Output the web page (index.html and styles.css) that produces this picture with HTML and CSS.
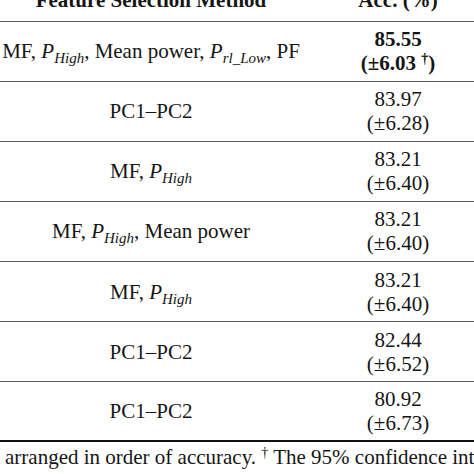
FILE: index.html
```html
<!DOCTYPE html>
<html>
<head>
<meta charset="utf-8">
<link rel="stylesheet" href="styles.css">
</head>
<body>
<div class="table">
  <div class="row head">
    <div class="c1">Feature Selection Method</div>
    <div class="c2">Acc. (%)</div>
  </div>
  <div class="row">
    <div class="c1">MF, <i>P</i><sub>High</sub>, Mean power, <i>P</i><sub>rl_Low</sub>, PF</div>
    <div class="c2 best">85.55<br>(±6.03 <sup>†</sup>)</div>
  </div>
  <div class="row">
    <div class="c1">PC1–PC2</div>
    <div class="c2">83.97<br>(±6.28)</div>
  </div>
  <div class="row">
    <div class="c1">MF, <i>P</i><sub>High</sub></div>
    <div class="c2">83.21<br>(±6.40)</div>
  </div>
  <div class="row">
    <div class="c1">MF, <i>P</i><sub>High</sub>, Mean power</div>
    <div class="c2">83.21<br>(±6.40)</div>
  </div>
  <div class="row">
    <div class="c1">MF, <i>P</i><sub>High</sub></div>
    <div class="c2">83.21<br>(±6.40)</div>
  </div>
  <div class="row">
    <div class="c1">PC1–PC2</div>
    <div class="c2">82.44<br>(±6.52)</div>
  </div>
  <div class="row last">
    <div class="c1">PC1–PC2</div>
    <div class="c2">80.92<br>(±6.73)</div>
  </div>
</div>
<p class="note">arranged in order of accuracy. <sup>†</sup> The 95% confidence interval of the accuracy.</p>
</body>
</html>
```
FILE: styles.css
```css
html, body {
  margin: 0;
  padding: 0;
  background: #fff;
  overflow: hidden;
}
body {
  width: 474px;
  height: 474px;
  font-family: "Liberation Serif", "Times New Roman", serif;
  font-size: 21px;
  line-height: 24px;
  color: #151515;
}
.table {
  margin-top: -20px;
  margin-left: -9px;
  width: 494px;
}
.row {
  display: grid;
  grid-template-columns: 320px 174px;
  align-items: center;
  box-sizing: border-box;
  height: 60.14px;
  border-bottom: 1.5px solid #5a5a5a;
}
.row.head {
  height: 41.5px;
  font-weight: bold;
}
.row.last {
  border-bottom: 2.5px solid #111;
}
.c1, .c2 {
  text-align: center;
  white-space: nowrap;
}
.best {
  font-weight: bold;
}
sub {
  font-size: 15px;
  font-style: italic;
  line-height: 0;
  vertical-align: -5px;
}
sup {
  font-size: 14px;
  line-height: 0;
  vertical-align: 7px;
}
.note {
  margin: 3px 0 0 5px;
  white-space: nowrap;
}
```
